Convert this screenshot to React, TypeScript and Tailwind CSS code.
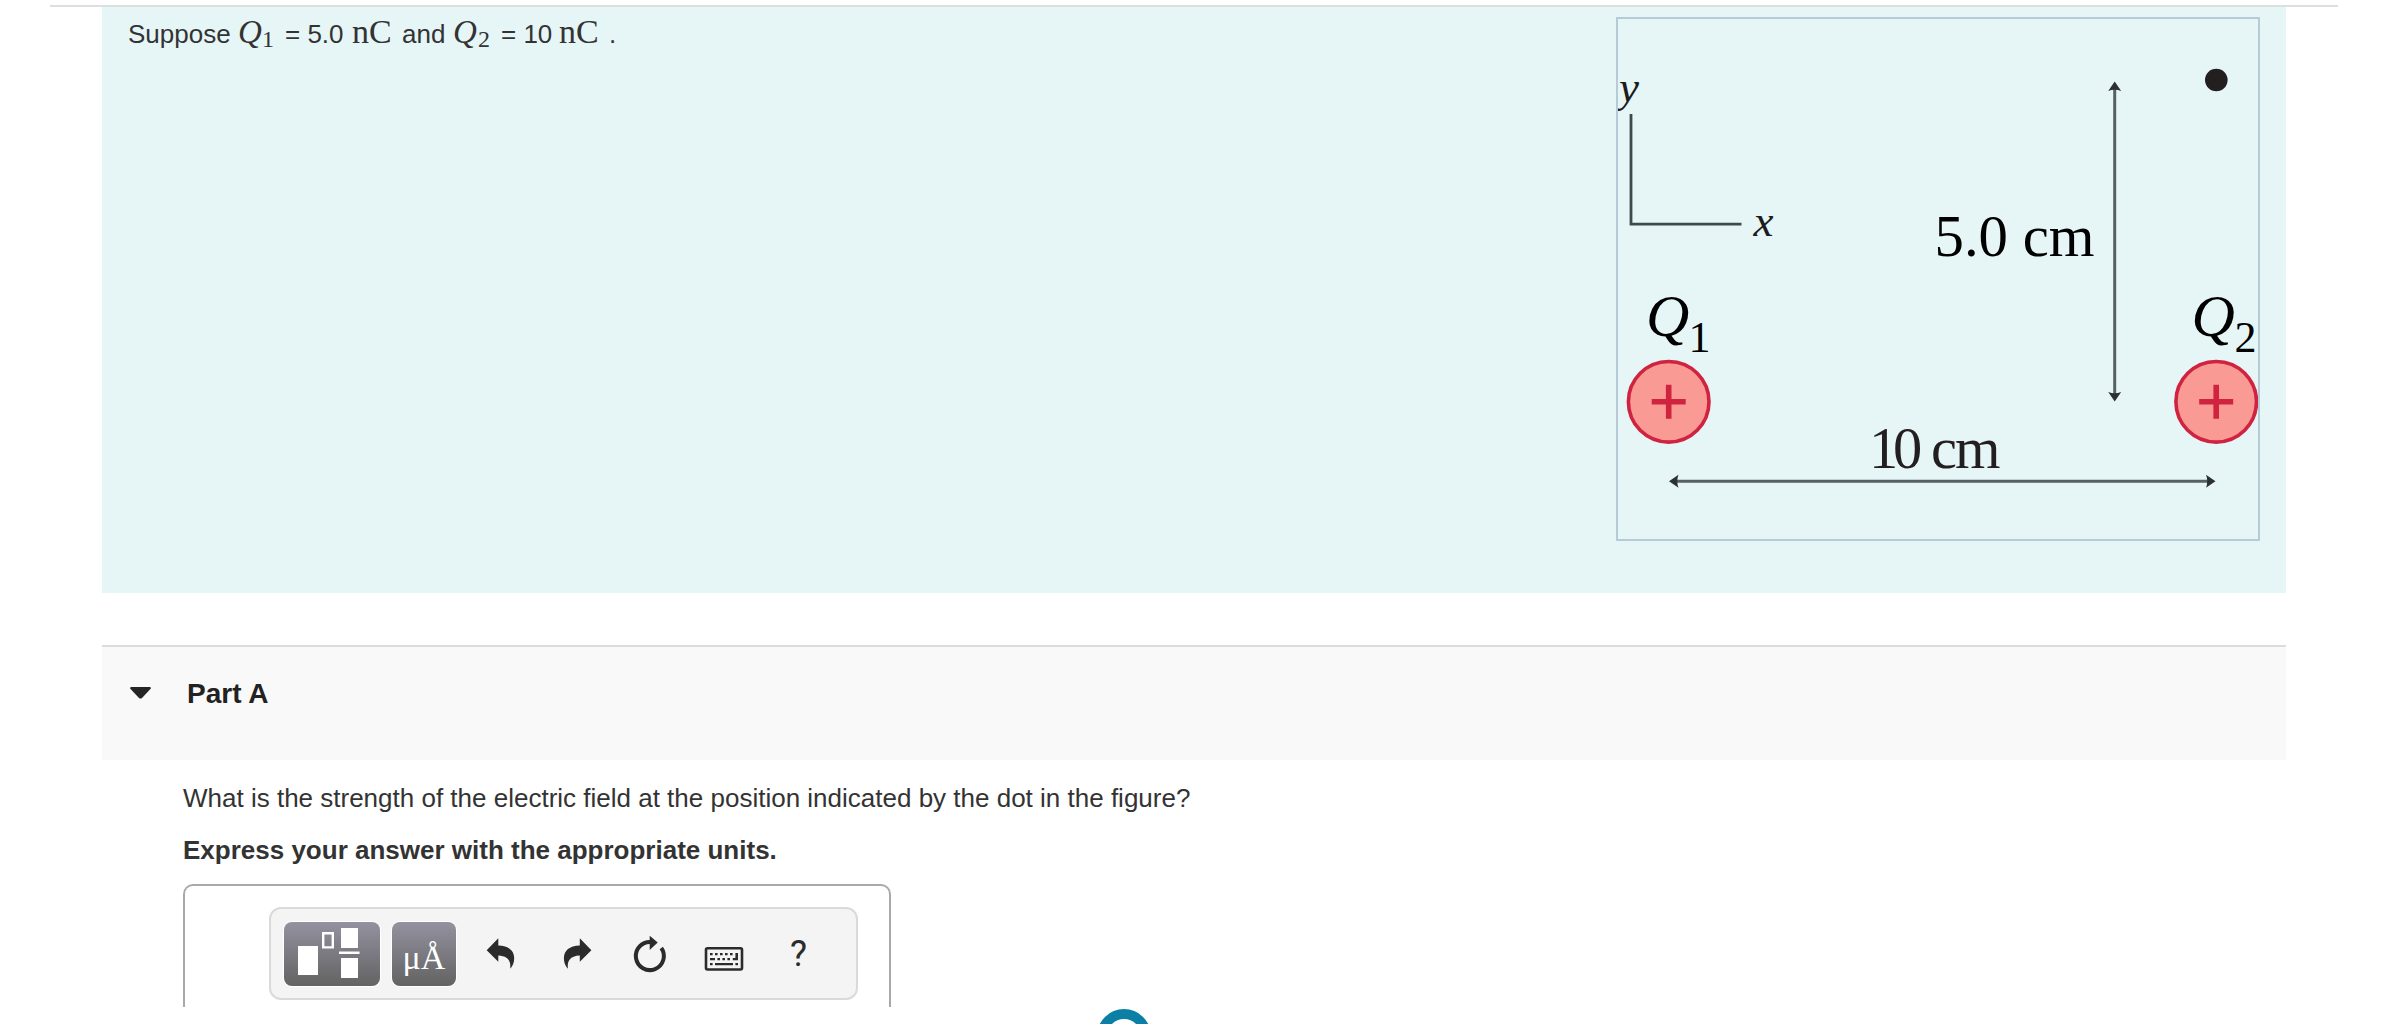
import React from "react";

interface ChargeProps {
  cx: number;
  cy: number;
}

function Charge({ cx, cy }: ChargeProps) {
  return (
    <g stroke="#cf2340">
      <circle cx={cx} cy={cy} r="40.3" fill="#fa9a94" strokeWidth="3.6" />
      <path d={`M${cx - 17} ${cy}h34M${cx} ${cy - 17}v34`} strokeWidth="5.6" />
    </g>
  );
}

function FieldFigure() {
  return (
    <svg width="640" height="520" viewBox="1618 19 640 520" className="block font-['Liberation_Serif',serif]">
      {/* axes */}
      <path d="M1631 114V224.2H1741.5" fill="none" stroke="#3f4b4b" strokeWidth="2.8" />
      <g fontStyle="italic" fontSize="45" fill="#1c1c1c">
        <text x="1619" y="101.5">y</text>
        <text x="1753.5" y="236">x</text>
      </g>

      {/* distances */}
      <g stroke="#566163" strokeWidth="3">
        <path d="M2114.7 89V394" />
        <path d="M1676 481.3H2208" />
      </g>
      <g fill="#2b3133">
        <path d="M2114.7 81.5l6.500 9.500q-6.500-2.500-13 0z" />
        <path d="M2114.7 401.500l6.500-9.500q-6.500 2.500-13 0z" />
        <path d="M1669 481.3l9.500-6.500q-2.500 6.500 0 13z" />
        <path d="M2215.500 481.3l-9.500-6.500q2.500 6.500 0 13z" />
      </g>
      <text x="1934.5" y="256" fontSize="58.8" fill="#000">5.0 cm</text>
      <text x="1869 1893 1921 1931 1955" y="467.500" fontSize="58.500" fill="#231f20">10 cm</text>

      {/* charges */}
      <g fontSize="60" fill="#000">
        <text x="1646" y="336" fontStyle="italic">Q</text>
        <text x="1688.5" y="351.7" fontSize="44">1</text>
        <text x="2191.5" y="336" fontStyle="italic">Q</text>
        <text x="2234.5" y="351.7" fontSize="44">2</text>
      </g>
      <Charge cx={1668.7} cy={401.8} />
      <Charge cx={2216.2} cy={401.8} />
      <circle cx="2216.3" cy="80" r="11.3" fill="#231f20" />
    </svg>
  );
}

function TemplateIcon() {
  return (
    <svg width="96" height="64" viewBox="284 922 96 64" fill="#fff">
      <path d="M298 946h20v29h-20zM341 928h17v20h-17zM339 951.6h20.5v2.4H339zM341 958h17v20h-17z" />
      <path d="M323.2 933.2h9.6v14.2h-9.6z" fill="none" stroke="#fff" strokeWidth="2.4" />
    </svg>
  );
}

function ToolbarIcons() {
  return (
    <svg width="270" height="64" viewBox="478 922 270 64" fill="#2b2b2b">
      {/* undo / redo */}
      <path d="M486.7 950.2l11.6-12v7.4c10.500.2 15.900 5.2 15.900 12.800 0 4-1.600 7.600-4.100 10.400 1.200-7.600-2-12.800-11.800-13.200v6.200z" />
      <path d="M591.4 950.2l-11.6-12v7.4c-10.500.2-15.900 5.2-15.900 12.800 0 4 1.600 7.600 4.100 10.400-1.200-7.600 2-12.800 11.800-13.200v6.200z" />
      {/* reset */}
      <path d="M651 942.1A14 14 0 1 0 661.3 948" fill="none" stroke="#2b2b2b" strokeWidth="4" />
      <path d="M649.7 935.8l8 6.7-8 7.5z" />
      {/* keyboard */}
      <rect x="706" y="948.3" width="36" height="21.2" rx="1.5" fill="none" stroke="#2b2b2b" strokeWidth="2.6" />
      <path d="M710 953h2.6v2.2H710zM715 953h2.6v2.2H715zM720 953h2.6v2.2H720zM725 953h2.6v2.2H725zM730 953h2.6v2.2H730zM735.4 953h2.6v7.2h-5.2V958h2.6zM710 958h5v2.2h-5zM717.4 958h2.6v2.2h-2.6zM722.4 958h2.6v2.2h-2.6zM727.4 958h2.6v2.2h-2.6zM710 963h2.6v2.2H710zM715 963h18v2.2h-18zM735.4 963h2.6v2.2h-2.6z" />
    </svg>
  );
}

function Charges() {
  return (
    <p className="flex h-[40px] items-baseline">
      <span className="w-[110px]">Suppose</span>
      <span className="w-[24px] font-['Liberation_Serif',serif] text-[33px] italic">Q</span>
      <span className="w-[23px] translate-y-1 font-['Liberation_Serif',serif] text-[24px]">1</span>
      <span className="w-[67px]">= 5.0</span>
      <span className="w-[50px] font-['Liberation_Serif',serif] text-[34px]">nC</span>
      <span className="w-[51px]">and</span>
      <span className="w-[25px] font-['Liberation_Serif',serif] text-[33px] italic">Q</span>
      <span className="w-[23px] translate-y-1 font-['Liberation_Serif',serif] text-[24px]">2</span>
      <span className="w-[58px]">= 10</span>
      <span className="w-[50px] font-['Liberation_Serif',serif] text-[34px]">nC</span>
      <span>.</span>
    </p>
  );
}

export default function App() {
  return (
    <div className="h-[1024px] w-[2388px] overflow-hidden bg-white pt-[5px] font-['Liberation_Sans',Arial,sans-serif] text-[26px] leading-[32px] text-[#333]">
      <div className="ml-[50px] h-[2px] w-[2288px] bg-[#dcdfdf]" />

      <section className="mx-[102px] flex h-[586px] justify-between bg-[#e6f6f7] pt-[10px] pr-[26px] pl-[26px]">
        <div className="-mt-px">
          <Charges />
        </div>
        <div className="h-[524px] w-[644px] border-2 border-[#b7cad8]">
          <FieldFigure />
        </div>
      </section>

      <header className="mx-[102px] mt-[52px] flex h-[115px] border-t-2 border-[#dcdcdc] bg-[#f9f9f9] pt-[30px] pl-[28px]">
        <svg width="21" height="12" viewBox="0 0 21 12" className="mt-[10px]">
          <path d="M1 0h19q1.6.6.4 2L12 11q-1.5 1.2-3 0L.6 2Q-.6.6 1 0z" fill="#252525" />
        </svg>
        <h2 className="mt-px ml-[36px] text-[28px] font-bold text-[#222]">Part A</h2>
      </header>

      <main className="pl-[183px]">
        <p className="mt-[22px]">What is the strength of the electric field at the position indicated by the dot in the figure?</p>
        <p className="mt-[20px] font-bold">Express your answer with the appropriate units.</p>

        <div className="mt-[18px] h-[123px] w-[708px] rounded-t-[10px] border-2 border-b-0 border-[#a9a9a9] pt-[21px] pl-[84px]">
          <div className="flex h-[93px] w-[589px] rounded-[12px] border-2 border-[#dadada] bg-[#f4f4f4] pt-[13px] pl-[13px]">
            <button className="h-[64px] w-[96px] rounded-[8px] bg-linear-to-b from-[#9492a0] to-[#636363] ring-1 ring-white">
              <TemplateIcon />
            </button>
            <button className="ml-[12px] h-[64px] w-[64px] rounded-[8px] bg-linear-to-b from-[#9492a0] to-[#636363] pt-[7px] font-['Liberation_Serif',serif] text-[34px] text-white ring-1 ring-white">
              μÅ
            </button>
            <div className="ml-[22px]">
              <ToolbarIcons />
            </div>
            <span className="ml-[42px] pt-[16px] font-['Roboto',sans-serif] text-[36px] text-[#2b2b2b]">?</span>
          </div>
        </div>
      </main>

      <svg width="54" height="15" viewBox="0 0 54 15" className="mt-[2px] ml-[1097px]">
        <circle cx="27" cy="27" r="22" fill="none" stroke="#0c7fa5" strokeWidth="10" />
      </svg>
    </div>
  );
}
